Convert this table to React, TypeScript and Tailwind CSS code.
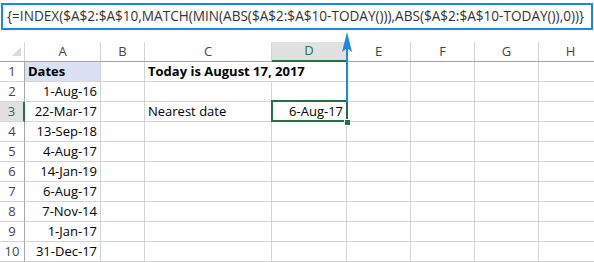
import type { ReactNode } from 'react'

const cols = [
  { key: 'A', w: 'w-[76px]' },
  { key: 'B', w: 'w-[44px]' },
  { key: 'C', w: 'w-[127px]' },
  { key: 'D', w: 'w-[75px]' },
  { key: 'E', w: 'w-[64px]' },
  { key: 'F', w: 'w-[64px]' },
  { key: 'G', w: 'w-[64px]' },
  { key: 'H', w: 'w-[64px]' },
]

const dates = [
  '1-Aug-16',
  '22-Mar-17',
  '13-Sep-18',
  '4-Aug-17',
  '14-Jan-19',
  '6-Aug-17',
  '7-Nov-14',
  '1-Jan-17',
  '31-Dec-17',
]

const formula =
  '{=INDEX($A$2:$A$10,MATCH(MIN(ABS($A$2:$A$10-TODAY())),ABS($A$2:$A$10-TODAY()),0))}'

type Cell = { text?: ReactNode; bold?: boolean; right?: boolean; bg?: string; spill?: boolean }

function rowCells(r: number): Record<string, Cell> {
  if (r === 1)
    return {
      A: { text: 'Dates', bold: true, bg: 'bg-[#d9e1f2]' },
      C: { text: 'Today is August 17, 2017', bold: true, spill: true },
    }
  const cells: Record<string, Cell> = { A: { text: dates[r - 2], right: true } }
  if (r === 3) {
    cells.C = { text: 'Nearest date' }
    cells.D = { text: '6-Aug-17', right: true }
  }
  return cells
}

function FormulaBar() {
  return (
    <div className="px-[1px] pt-[3px] h-[42px]">
      <div className="h-[27px] border-2 border-[#1b87e6] flex items-center pl-[4px] text-[13.6px] text-[#333] whitespace-nowrap overflow-hidden">
        {formula}
      </div>
    </div>
  )
}

function HeaderRow() {
  return (
    <div className="flex h-[20px] border-b border-[#a6a6a6]">
      <div className="w-[25px] shrink-0 border-r border-[#d4d4d4] relative">
        <div className="absolute right-[3px] bottom-[5px] w-0 h-0 border-l-[9px] border-l-transparent border-b-[9px] border-b-[#dadada]" />
      </div>
      {cols.map((c) =>
        c.key === 'D' ? (
          <div
            key={c.key}
            className={`${c.w} shrink-0 bg-[#e1e1e1] border-r border-[#d4d4d4] border-b-2 border-b-[#217346] -mb-px flex items-center justify-center text-[#217346]`}
          >
            {c.key}
          </div>
        ) : (
          <div
            key={c.key}
            className={`${c.w} shrink-0 border-r border-[#d4d4d4] flex items-center justify-center text-[#444]`}
          >
            {c.key}
          </div>
        ),
      )}
    </div>
  )
}

function DataRow({ r }: { r: number }) {
  const cells = rowCells(r)
  const active = r === 3
  return (
    <div className="flex h-[20px]">
      <div
        className={
          active
            ? 'w-[25px] shrink-0 bg-[#e1e1e1] border-r-2 border-r-[#217346] border-b border-[#d4d4d4] flex items-center justify-center text-[#217346]'
            : 'w-[25px] shrink-0 border-r border-[#a6a6a6] border-b border-b-[#d4d4d4] flex items-center justify-center text-[#444]'
        }
      >
        {r}
      </div>
      {cols.map((c) => {
        const cell = cells[c.key]
        const selected = active && c.key === 'D'
        return (
          <div
            key={c.key}
            className={`${c.w} shrink-0 border-b border-[#d4d4d4] flex items-center px-[3px] whitespace-nowrap relative ${
              cell?.spill || selected ? 'z-10' : ''
            } ${cell?.spill ? '' : 'border-r'} ${cell?.bg ?? ''} ${cell?.right ? 'justify-end' : ''} ${
              cell?.bold ? 'font-bold' : ''
            }`}
          >
            {cell?.text}
            {selected && (
              <>
                <div className="absolute -left-px -top-[2px] right-[-2px] bottom-[-1px] border-2 border-[#217346] pointer-events-none" />
                <div className="absolute right-[-5px] bottom-[-5px] w-[7px] h-[7px] bg-[#217346] border border-white" />
              </>
            )}
          </div>
        )
      })}
    </div>
  )
}

// blue pointer from the selected cell up to the formula bar
function Arrow() {
  return (
    <svg className="absolute left-[340px] top-[30px] z-20" width="14" height="72" viewBox="0 0 14 72">
      <line x1="7" y1="12" x2="7" y2="72" stroke="#1b87e6" strokeWidth="2" />
      <path d="M7 2 L12 22 L7 18 L2 22 Z" fill="#1b87e6" />
    </svg>
  )
}

export default function App() {
  return (
    <div
      className="relative w-[594px] h-[262px] overflow-hidden bg-white text-black text-[13px]"
      style={{ fontFamily: '"Open Sans", "Noto Sans", sans-serif' }}
    >
      <FormulaBar />
      <HeaderRow />
      {Array.from({ length: 10 }).map((_, i) => (
        <DataRow key={i} r={i + 1} />
      ))}
      <Arrow />
    </div>
  )
}
